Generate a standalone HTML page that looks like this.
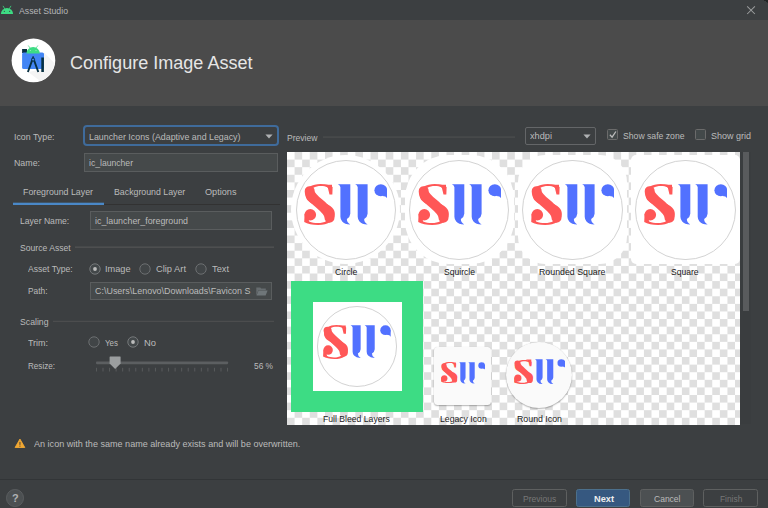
<!DOCTYPE html>
<html lang="en">
<head>
<meta charset="utf-8">
<title>Asset Studio</title>
<style>
html,body{margin:0;padding:0;background:#3c3f41;}
body{width:768px;height:508px;overflow:hidden;font-family:"Liberation Sans",sans-serif;}
#win{position:relative;width:768px;height:508px;background:#3c3f41;overflow:hidden;}
#win div,#win svg,#win span{position:absolute;box-sizing:border-box;}
.t{white-space:pre;transform-origin:0 50%;}
#hdr{left:0;top:20px;width:768px;height:86px;background:#4b4b4b;}
.inp{background:#45494a;border:1px solid #5a5d5e;}
.line{height:2px;background:linear-gradient(#46494a 50%,#4e4f50 50%);}
.chk{width:11px;height:11px;border:1px solid #6b6b6b;background:#43494a;border-radius:1.5px;}
.btn{top:489px;width:54.6px;height:17.8px;border-radius:2.5px;border:1px solid #5e6060;}
#panel{left:287px;top:151.8px;width:453px;height:272.9px;overflow:hidden;
 background-color:#fff;background-image:conic-gradient(#dfdfdf 25%,#fff 0 50%,#dfdfdf 0 75%,#fff 0);background-size:15.2px 15.2px;}
.safe{border:1px solid #d3d3d3;border-radius:50%;}
.white{background:#fff;}

</style>
</head>
<body>
<div id="win">
<!-- title bar -->
<svg style="left:0;top:5px" width="14" height="10" viewBox="0 0 14 10">
  <path d="M0.9 9 A6.1 6.1 0 0 1 13.1 9 Z" fill="#3ddc84"/>
  <path d="M3.2 1.2 L4.6 3.6 M10.8 1.2 L9.4 3.6" stroke="#3ddc84" stroke-width="0.8" stroke-linecap="round"/>
  <circle cx="4.3" cy="6.4" r="0.55" fill="#3c3f41"/><circle cx="9.7" cy="6.4" r="0.55" fill="#3c3f41"/>
</svg>
<svg style="left:746px;top:5px" width="10" height="10" viewBox="0 0 10 10">
  <path d="M1.2 1.4 L8.9 9 M8.9 1.4 L1.2 9" stroke="#9b9d9e" stroke-width="1.05"/>
</svg>
<div style="left:764px;top:0;width:4px;height:1px;background:#232526"></div>
<div style="left:766px;top:1px;width:2px;height:1px;background:#232526"></div>
<div style="left:767px;top:2px;width:1px;height:1px;background:#2a2c2e"></div>
<!-- header -->
<div id="hdr"></div>
<svg style="left:11px;top:38px" width="45" height="45" viewBox="0 0 45 45">
  <circle cx="22.45" cy="22.45" r="21.85" fill="#fff"/>
  <path d="M33 14.6 L43.6 25.2 A21.85 21.85 0 0 1 29.5 43.2 L17 34 L33 31 Z" fill="#f4f4f4"/>
  <path d="M16 11 H11.1 V15 H16 Z" fill="#073042"/>
  <rect x="11.1" y="14.4" width="21.9" height="16.6" rx="1.6" fill="#4285f4"/>
  <path d="M15.4 15.5 A6.75 6.4 0 0 1 28.9 15.5 Z" fill="#3ddc84"/>
  <path d="M17.5 7.8 L19 10 M26.7 7.8 L25.2 10" stroke="#3ddc84" stroke-width="0.7" stroke-linecap="round"/>
  <circle cx="19.3" cy="12.6" r="0.5" fill="#b8f0d0"/><circle cx="25" cy="12.6" r="0.5" fill="#b8f0d0"/>
  <rect x="30.3" y="19.5" width="2.6" height="14.5" fill="#073042"/>
  <path d="M22.1 19.6 L16.9 34 M22.1 19.6 L27.3 34" stroke="#073042" stroke-width="1.9" fill="none"/>
  <circle cx="22.1" cy="21.6" r="1.5" fill="#4285f4" stroke="#073042" stroke-width="0.9"/>
  <path d="M22.1 18 V20" stroke="#073042" stroke-width="1"/>
</svg>

<!-- Icon type combo -->
<div style="left:83px;top:125.2px;width:196px;height:21.1px;border-radius:4px;background:#3c3f41;border:2.3px solid #3f6b9b"></div>
<svg style="left:265px;top:134px" width="8" height="5" viewBox="0 0 8 5"><path d="M0.4 0.5 H7.6 L4 4.6 Z" fill="#afb1b3"/></svg>
<!-- Name -->
<div class="inp" style="left:84px;top:153px;width:194px;height:19px"></div>
<!-- Tabs -->
<div style="left:13px;top:204px;width:267px;height:1px;background:#323232"></div>
<div style="left:13px;top:202px;width:90.8px;height:1px;background:rgba(74,136,199,.3)"></div>
<div style="left:13px;top:203px;width:90.8px;height:2px;background:#4a88c7"></div>
<!-- Layer name -->
<div class="inp" style="left:90px;top:211px;width:182px;height:18.6px"></div>
<!-- Source Asset -->
<div class="line" style="left:75px;top:246px;width:199px"></div>
<svg style="left:87.90px;top:261.60px" width="14" height="14" viewBox="0 0 14 14"><circle cx="7" cy="7" r="5.2" fill="#43484a" stroke="#75787a" stroke-width="1"/><circle cx="7" cy="7" r="1.9" fill="#bdbdbd"/></svg>
<svg style="left:138.40px;top:261.60px" width="14" height="14" viewBox="0 0 14 14"><circle cx="7" cy="7" r="5.2" fill="#414547" stroke="#6c6f71" stroke-width="1"/></svg>
<svg style="left:193.60px;top:261.60px" width="14" height="14" viewBox="0 0 14 14"><circle cx="7" cy="7" r="5.2" fill="#414547" stroke="#6c6f71" stroke-width="1"/></svg>
<div class="inp" style="left:90px;top:281.5px;width:181.5px;height:18.2px"></div>
<svg style="left:255.5px;top:286.6px" width="12" height="9" viewBox="0 0 12 9">
  <path d="M0.3 8.6 V0.4 H4.3 L5.2 1.5 H9.8 V3.2 H2.4 L0.3 8.6 Z" fill="#666c6f"/>
  <path d="M2.6 3.5 H11.6 L9.6 8.6 H0.5 Z" fill="#6f7679"/>
</svg>
<!-- Scaling -->
<div class="line" style="left:53px;top:320px;width:221px;background:linear-gradient(#3f4244 50%,#4c4d4e 50%)"></div>
<svg style="left:87.40px;top:335.40px" width="14" height="14" viewBox="0 0 14 14"><circle cx="7" cy="7" r="5.2" fill="#414547" stroke="#6c6f71" stroke-width="1"/></svg>
<svg style="left:126.40px;top:335.40px" width="14" height="14" viewBox="0 0 14 14"><circle cx="7" cy="7" r="5.2" fill="#43484a" stroke="#75787a" stroke-width="1"/><circle cx="7" cy="7" r="1.9" fill="#bdbdbd"/></svg>
<!-- slider -->
<svg style="left:96px;top:360px" width="134" height="12" viewBox="0 0 134 12">
  <rect x="0" y="1.55" width="132.1" height="2.6" rx="0.8" fill="#5c5f61"/>
  <path d="M0.45 7.8V11.5M7.00 7.8V11.5M13.56 7.8V11.5M20.11 7.8V11.5M26.67 7.8V11.5M33.23 7.8V11.5M39.78 7.8V11.5M46.34 7.8V11.5M52.89 7.8V11.5M59.45 7.8V11.5M66.00 7.8V11.5M72.55 7.8V11.5M79.11 7.8V11.5M85.67 7.8V11.5M92.22 7.8V11.5M98.77 7.8V11.5M105.33 7.8V11.5M111.89 7.8V11.5M118.44 7.8V11.5M124.99 7.8V11.5M131.55 7.8V11.5" stroke="#5b5e60" stroke-width="0.9"/>
</svg>
<svg style="left:108.5px;top:355.7px" width="13" height="15" viewBox="0 0 13 15">
  <path d="M1.1 0.5 H11.1 Q11.6 0.5 11.6 1 V7.4 L6.1 13.1 L0.6 7.4 V1 Q0.6 0.5 1.1 0.5 Z" fill="#9b9e9f"/>
</svg>
<!-- warning -->
<svg style="left:13.5px;top:438px" width="12" height="11" viewBox="0 0 12 11">
  <path d="M5.95 1.1 L10.8 9.5 H1.1 Z" fill="#f0a732" stroke="#f0a732" stroke-width="0.9" stroke-linejoin="round"/>
  <path d="M5.95 3.9 V6.9" stroke="#4a4336" stroke-width="1"/>
  <rect x="5.45" y="7.6" width="1" height="1.1" fill="#4a4336"/>
</svg>

<!-- preview header -->
<div class="line" style="left:322.5px;top:136px;width:192.5px;background:linear-gradient(#444748 50%,#47494a 50%)"></div>
<div style="left:525px;top:127px;width:70.5px;height:17.6px;border:1px solid #646668;border-radius:2px"></div>
<svg style="left:583px;top:133.6px" width="8" height="5" viewBox="0 0 8 5"><path d="M0.4 0.5 H7.6 L4 4.6 Z" fill="#afb1b3"/></svg>
<div class="chk" style="left:607px;top:129px"></div>
<svg style="left:607px;top:129px" width="11" height="11" viewBox="0 0 11 11"><path d="M2.9 5.7 L5.1 8.1 L8.9 2.5" stroke="#bdbdbd" stroke-width="1.3" fill="none"/></svg>
<div class="chk" style="left:695px;top:129px"></div>

<!-- preview panel -->
<div id="panel">
  <!-- top row shapes (coords relative to panel: page - (287,151.8)) -->
  <div class="white" style="left:4.25px;top:3.7px;width:109px;height:109px;border-radius:50%"></div>
  <div class="white" style="left:117.5px;top:3.7px;width:109px;height:109px;border-radius:40%"></div>
  <div class="white" style="left:230.75px;top:3.7px;width:109px;height:109px;border-radius:27px"></div>
  <div class="white" style="left:343.5px;top:3.7px;width:109.5px;height:109px;border-radius:5px"></div>
  <div class="safe" style="left:8.5px;top:8px;width:100.5px;height:100.5px"></div>
  <div class="safe" style="left:121.75px;top:8px;width:100.5px;height:100.5px"></div>
  <div class="safe" style="left:235px;top:8px;width:100.5px;height:100.5px"></div>
  <div class="safe" style="left:348px;top:8px;width:100.5px;height:100.5px"></div>
  <svg style="left:17.25px;top:32.221000000000004px" width="83.00" height="41.35" viewBox="0 0 83 41.05"><text transform="translate(-3.37 39.95) scale(1.231 1)" style="font-family:'Noto Serif CJK SC','Liberation Serif',serif;font-weight:400;font-size:53.5px" fill="#ff5757">S</text><path d="M5.7 7C5.7 16 25.5 23 25.5 33.5" stroke="#ff5757" stroke-width="10" fill="none" stroke-linecap="round"/><circle cx="6.3" cy="30.6" r="5.8" fill="#ff5757"/><path d="M19.5 0.5H28V9.5Q25.5 3.5 19.5 0.5Z" fill="#ff5757"/><path d="M33.9 0.1H46.3V29.5Q46.2 32.5 42.9 34.9Q42.6 38 46.3 40.3Q40.8 40.4 38.2 37.3Q36.4 35.2 36.4 32.6V3Q36.2 1 33.9 0.1Z M51.2 0.1H63.6V29.5Q63.5 32.5 60.2 34.9Q59.9 38 63.6 40.3Q58.1 40.4 55.5 37.3Q53.7 35.2 53.7 32.6V3Q53.5 1 51.2 0.1Z" fill="#5271ff"/><ellipse cx="76.8" cy="6.15" rx="6.4" ry="6.05" fill="#5271ff"/><path d="M83.2 6V14.3Q82.4 12 78.5 11.9Z" fill="#5271ff"/></svg>
  <svg style="left:130.50px;top:32.221000000000004px" width="83.00" height="41.35" viewBox="0 0 83 41.05"><text transform="translate(-3.37 39.95) scale(1.231 1)" style="font-family:'Noto Serif CJK SC','Liberation Serif',serif;font-weight:400;font-size:53.5px" fill="#ff5757">S</text><path d="M5.7 7C5.7 16 25.5 23 25.5 33.5" stroke="#ff5757" stroke-width="10" fill="none" stroke-linecap="round"/><circle cx="6.3" cy="30.6" r="5.8" fill="#ff5757"/><path d="M19.5 0.5H28V9.5Q25.5 3.5 19.5 0.5Z" fill="#ff5757"/><path d="M33.9 0.1H46.3V29.5Q46.2 32.5 42.9 34.9Q42.6 38 46.3 40.3Q40.8 40.4 38.2 37.3Q36.4 35.2 36.4 32.6V3Q36.2 1 33.9 0.1Z M51.2 0.1H63.6V29.5Q63.5 32.5 60.2 34.9Q59.9 38 63.6 40.3Q58.1 40.4 55.5 37.3Q53.7 35.2 53.7 32.6V3Q53.5 1 51.2 0.1Z" fill="#5271ff"/><ellipse cx="76.8" cy="6.15" rx="6.4" ry="6.05" fill="#5271ff"/><path d="M83.2 6V14.3Q82.4 12 78.5 11.9Z" fill="#5271ff"/></svg>
  <svg style="left:243.75px;top:32.221000000000004px" width="83.00" height="41.35" viewBox="0 0 83 41.05"><text transform="translate(-3.37 39.95) scale(1.231 1)" style="font-family:'Noto Serif CJK SC','Liberation Serif',serif;font-weight:400;font-size:53.5px" fill="#ff5757">S</text><path d="M5.7 7C5.7 16 25.5 23 25.5 33.5" stroke="#ff5757" stroke-width="10" fill="none" stroke-linecap="round"/><circle cx="6.3" cy="30.6" r="5.8" fill="#ff5757"/><path d="M19.5 0.5H28V9.5Q25.5 3.5 19.5 0.5Z" fill="#ff5757"/><path d="M33.9 0.1H46.3V29.5Q46.2 32.5 42.9 34.9Q42.6 38 46.3 40.3Q40.8 40.4 38.2 37.3Q36.4 35.2 36.4 32.6V3Q36.2 1 33.9 0.1Z M51.2 0.1H63.6V29.5Q63.5 32.5 60.2 34.9Q59.9 38 63.6 40.3Q58.1 40.4 55.5 37.3Q53.7 35.2 53.7 32.6V3Q53.5 1 51.2 0.1Z" fill="#5271ff"/><ellipse cx="76.8" cy="6.15" rx="6.4" ry="6.05" fill="#5271ff"/><path d="M83.2 6V14.3Q82.4 12 78.5 11.9Z" fill="#5271ff"/></svg>
  <svg style="left:356.80px;top:32.221000000000004px" width="83.00" height="41.35" viewBox="0 0 83 41.05"><text transform="translate(-3.37 39.95) scale(1.231 1)" style="font-family:'Noto Serif CJK SC','Liberation Serif',serif;font-weight:400;font-size:53.5px" fill="#ff5757">S</text><path d="M5.7 7C5.7 16 25.5 23 25.5 33.5" stroke="#ff5757" stroke-width="10" fill="none" stroke-linecap="round"/><circle cx="6.3" cy="30.6" r="5.8" fill="#ff5757"/><path d="M19.5 0.5H28V9.5Q25.5 3.5 19.5 0.5Z" fill="#ff5757"/><path d="M33.9 0.1H46.3V29.5Q46.2 32.5 42.9 34.9Q42.6 38 46.3 40.3Q40.8 40.4 38.2 37.3Q36.4 35.2 36.4 32.6V3Q36.2 1 33.9 0.1Z M51.2 0.1H63.6V29.5Q63.5 32.5 60.2 34.9Q59.9 38 63.6 40.3Q58.1 40.4 55.5 37.3Q53.7 35.2 53.7 32.6V3Q53.5 1 51.2 0.1Z" fill="#5271ff"/><ellipse cx="76.8" cy="6.15" rx="6.4" ry="6.05" fill="#5271ff"/><path d="M83.2 6V14.3Q82.4 12 78.5 11.9Z" fill="#5271ff"/></svg>
  <!-- full bleed -->
  <div style="left:3.6px;top:129.3px;width:132.5px;height:131.1px;background:#3ddc84"></div>
  <div class="white" style="left:26px;top:150.2px;width:88.6px;height:89px"></div>
  <div class="safe" style="left:29.8px;top:154.2px;width:80.7px;height:80.7px"></div>
  <svg style="left:36.25px;top:173.4725px" width="67.50" height="33.74" viewBox="0 0 83 41.05"><text transform="translate(-3.37 39.95) scale(1.231 1)" style="font-family:'Noto Serif CJK SC','Liberation Serif',serif;font-weight:400;font-size:53.5px" fill="#ff5757">S</text><path d="M5.7 7C5.7 16 25.5 23 25.5 33.5" stroke="#ff5757" stroke-width="10" fill="none" stroke-linecap="round"/><circle cx="6.3" cy="30.6" r="5.8" fill="#ff5757"/><path d="M19.5 0.5H28V9.5Q25.5 3.5 19.5 0.5Z" fill="#ff5757"/><path d="M33.9 0.1H46.3V29.5Q46.2 32.5 42.9 34.9Q42.6 38 46.3 40.3Q40.8 40.4 38.2 37.3Q36.4 35.2 36.4 32.6V3Q36.2 1 33.9 0.1Z M51.2 0.1H63.6V29.5Q63.5 32.5 60.2 34.9Q59.9 38 63.6 40.3Q58.1 40.4 55.5 37.3Q53.7 35.2 53.7 32.6V3Q53.5 1 51.2 0.1Z" fill="#5271ff"/><ellipse cx="76.8" cy="6.15" rx="6.4" ry="6.05" fill="#5271ff"/><path d="M83.2 6V14.3Q82.4 12 78.5 11.9Z" fill="#5271ff"/></svg>
  <!-- legacy -->
  <div style="left:146.75px;top:195.2px;width:57.5px;height:58px;border-radius:3.5px;background:#fafafa;box-shadow:0 1px 1.5px rgba(0,0,0,.28),0 0 1px rgba(0,0,0,.15)"></div>
  <svg style="left:153.50px;top:210.178px" width="44.00" height="22.20" viewBox="0 0 83 41.05"><text transform="translate(-3.37 39.95) scale(1.231 1)" style="font-family:'Noto Serif CJK SC','Liberation Serif',serif;font-weight:400;font-size:53.5px" fill="#ff5757">S</text><path d="M5.7 7C5.7 16 25.5 23 25.5 33.5" stroke="#ff5757" stroke-width="10" fill="none" stroke-linecap="round"/><circle cx="6.3" cy="30.6" r="5.8" fill="#ff5757"/><path d="M19.5 0.5H28V9.5Q25.5 3.5 19.5 0.5Z" fill="#ff5757"/><path d="M33.9 0.1H46.3V29.5Q46.2 32.5 42.9 34.9Q42.6 38 46.3 40.3Q40.8 40.4 38.2 37.3Q36.4 35.2 36.4 32.6V3Q36.2 1 33.9 0.1Z M51.2 0.1H63.6V29.5Q63.5 32.5 60.2 34.9Q59.9 38 63.6 40.3Q58.1 40.4 55.5 37.3Q53.7 35.2 53.7 32.6V3Q53.5 1 51.2 0.1Z" fill="#5271ff"/><ellipse cx="76.8" cy="6.15" rx="6.4" ry="6.05" fill="#5271ff"/><path d="M83.2 6V14.3Q82.4 12 78.5 11.9Z" fill="#5271ff"/></svg>
  <!-- round -->
  <div style="left:219px;top:190.2px;width:66px;height:66px;border-radius:50%;background:#fafafa;box-shadow:0 1px 1.5px rgba(0,0,0,.28),0 0 1px rgba(0,0,0,.15)"></div>
  <svg style="left:226.57px;top:207.15875px" width="51.25" height="25.76" viewBox="0 0 83 41.05"><text transform="translate(-3.37 39.95) scale(1.231 1)" style="font-family:'Noto Serif CJK SC','Liberation Serif',serif;font-weight:400;font-size:53.5px" fill="#ff5757">S</text><path d="M5.7 7C5.7 16 25.5 23 25.5 33.5" stroke="#ff5757" stroke-width="10" fill="none" stroke-linecap="round"/><circle cx="6.3" cy="30.6" r="5.8" fill="#ff5757"/><path d="M19.5 0.5H28V9.5Q25.5 3.5 19.5 0.5Z" fill="#ff5757"/><path d="M33.9 0.1H46.3V29.5Q46.2 32.5 42.9 34.9Q42.6 38 46.3 40.3Q40.8 40.4 38.2 37.3Q36.4 35.2 36.4 32.6V3Q36.2 1 33.9 0.1Z M51.2 0.1H63.6V29.5Q63.5 32.5 60.2 34.9Q59.9 38 63.6 40.3Q58.1 40.4 55.5 37.3Q53.7 35.2 53.7 32.6V3Q53.5 1 51.2 0.1Z" fill="#5271ff"/><ellipse cx="76.8" cy="6.15" rx="6.4" ry="6.05" fill="#5271ff"/><path d="M83.2 6V14.3Q82.4 12 78.5 11.9Z" fill="#5271ff"/></svg>
</div>
<!-- scrollbar -->
<div style="left:740px;top:151.8px;width:11px;height:272.7px;background:#3a3d3f"></div>
<div style="left:742.8px;top:151.8px;width:6.2px;height:159px;background:#595b5d"></div>

<!-- footer -->
<div style="left:0;top:478.7px;width:768px;height:1px;background:#323537"></div>
<div style="left:6.1px;top:489.1px;width:17.7px;height:17.7px;border-radius:50%;background:#4c5052;border:1px solid #5a5d5f"></div>
<span class="t" style="left:11.6px;top:490.5px;font-size:11.5px;line-height:15px;color:#b0b2b4;font-weight:700;transform:scaleX(.95)">?</span>
<div class="btn" style="left:512px"></div>
<div class="btn" style="left:575.7px;background:#365880;border-color:#4c708c"></div>
<div class="btn" style="left:639.5px;background:#4c5052"></div>
<div class="btn" style="left:703.3px"></div>

<div id="texts">
<span class="t" style="left:18.75px;top:6px;font-size:9px;line-height:10px;color:#b4b6b8;transform:scaleX(0.9697)">Asset Studio</span>
<span class="t" style="left:70.00px;top:52px;font-size:18.7px;line-height:21px;color:#e6e6e6;transform:scaleX(0.9653)">Configure Image Asset</span>
<span class="t" style="left:13.50px;top:131px;font-size:9.8px;line-height:11px;color:#bbbbbb;transform:scaleX(0.8994)">Icon Type:</span>
<span class="t" style="left:89.00px;top:131px;font-size:9.8px;line-height:11px;color:#bbbbbb;transform:scaleX(0.9031)">Launcher Icons (Adaptive and Legacy)</span>
<span class="t" style="left:13.50px;top:157px;font-size:9.8px;line-height:11px;color:#bbbbbb;transform:scaleX(0.9009)">Name:</span>
<span class="t" style="left:89.00px;top:157px;font-size:9.8px;line-height:11px;color:#bbbbbb;transform:scaleX(0.8781)">ic_launcher</span>
<span class="t" style="left:23.25px;top:186px;font-size:9.8px;line-height:11px;color:#bbbbbb;transform:scaleX(0.8987)">Foreground Layer</span>
<span class="t" style="left:113.75px;top:186px;font-size:9.8px;line-height:11px;color:#bbbbbb;transform:scaleX(0.8961)">Background Layer</span>
<span class="t" style="left:204.50px;top:186px;font-size:9.8px;line-height:11px;color:#bbbbbb;transform:scaleX(0.9329)">Options</span>
<span class="t" style="left:19.75px;top:215px;font-size:9.8px;line-height:11px;color:#bbbbbb;transform:scaleX(0.8780)">Layer Name:</span>
<span class="t" style="left:95.00px;top:215px;font-size:9.8px;line-height:11px;color:#bbbbbb;transform:scaleX(0.9033)">ic_launcher_foreground</span>
<span class="t" style="left:19.75px;top:242px;font-size:9.8px;line-height:11px;color:#bbbbbb;transform:scaleX(0.8790)">Source Asset</span>
<span class="t" style="left:27.50px;top:263px;font-size:9.8px;line-height:11px;color:#bbbbbb;transform:scaleX(0.8772)">Asset Type:</span>
<span class="t" style="left:105.00px;top:263px;font-size:9.8px;line-height:11px;color:#bbbbbb;transform:scaleX(0.9363)">Image</span>
<span class="t" style="left:156.00px;top:263px;font-size:9.8px;line-height:11px;color:#bbbbbb;transform:scaleX(0.9500)">Clip Art</span>
<span class="t" style="left:211.50px;top:263px;font-size:9.8px;line-height:11px;color:#bbbbbb;transform:scaleX(0.9461)">Text</span>
<span class="t" style="left:27.50px;top:285px;font-size:9.8px;line-height:11px;color:#bbbbbb;transform:scaleX(0.8519)">Path:</span>
<span class="t" style="left:95.00px;top:285px;font-size:9.8px;line-height:11px;color:#bbbbbb;transform:scaleX(0.9124)">C:\Users\Lenovo\Downloads\Favicon S</span>
<span class="t" style="left:19.75px;top:316px;font-size:9.8px;line-height:11px;color:#bbbbbb;transform:scaleX(0.8867)">Scaling</span>
<span class="t" style="left:27.50px;top:337px;font-size:9.8px;line-height:11px;color:#bbbbbb;transform:scaleX(0.9110)">Trim:</span>
<span class="t" style="left:105.00px;top:337px;font-size:9.8px;line-height:11px;color:#bbbbbb;transform:scaleX(0.8133)">Yes</span>
<span class="t" style="left:144.00px;top:337px;font-size:9.8px;line-height:11px;color:#bbbbbb;transform:scaleX(0.9576)">No</span>
<span class="t" style="left:27.50px;top:360px;font-size:9.8px;line-height:11px;color:#bbbbbb;transform:scaleX(0.8264)">Resize:</span>
<span class="t" style="left:254.00px;top:360px;font-size:9.8px;line-height:11px;color:#bbbbbb;transform:scaleX(0.8503)">56 %</span>
<span class="t" style="left:33.75px;top:438px;font-size:9.8px;line-height:11px;color:#bbbbbb;transform:scaleX(0.9243)">An icon with the same name already exists and will be overwritten.</span>
<span class="t" style="left:286.50px;top:132px;font-size:9.8px;line-height:11px;color:#bbbbbb;transform:scaleX(0.8749)">Preview</span>
<span class="t" style="left:529.50px;top:130px;font-size:9.8px;line-height:11px;color:#bbbbbb;transform:scaleX(0.9393)">xhdpi</span>
<span class="t" style="left:623.00px;top:130px;font-size:9.8px;line-height:11px;color:#bbbbbb;transform:scaleX(0.8821)">Show safe zone</span>
<span class="t" style="left:710.50px;top:130px;font-size:9.8px;line-height:11px;color:#bbbbbb;transform:scaleX(0.9179)">Show grid</span>
<span class="t" style="left:334.60px;top:266px;font-size:9.8px;line-height:11px;color:#1a1a1a;transform:scaleX(0.8903)">Circle</span>
<span class="t" style="left:443.70px;top:266px;font-size:9.8px;line-height:11px;color:#1a1a1a;transform:scaleX(0.8756)">Squircle</span>
<span class="t" style="left:538.55px;top:266px;font-size:9.8px;line-height:11px;color:#1a1a1a;transform:scaleX(0.8975)">Rounded Square</span>
<span class="t" style="left:670.65px;top:266px;font-size:9.8px;line-height:11px;color:#1a1a1a;transform:scaleX(0.8704)">Square</span>
<span class="t" style="left:322.90px;top:413px;font-size:9.8px;line-height:11px;color:#1a1a1a;transform:scaleX(0.8811)">Full Bleed Layers</span>
<span class="t" style="left:439.52px;top:413px;font-size:9.8px;line-height:11px;color:#1a1a1a;transform:scaleX(0.8847)">Legacy Icon</span>
<span class="t" style="left:517.00px;top:413px;font-size:9.8px;line-height:11px;color:#1a1a1a;transform:scaleX(0.8980)">Round Icon</span>
<span class="t" style="left:522.80px;top:493px;font-size:9.8px;line-height:11px;color:#777777;transform:scaleX(0.8734)">Previous</span>
<span class="t" style="left:593.90px;top:493px;font-size:9.8px;line-height:11px;color:#eeeeee;transform:scaleX(0.9412);font-weight:700">Next</span>
<span class="t" style="left:653.90px;top:493px;font-size:9.8px;line-height:11px;color:#bbbbbb;transform:scaleX(0.8689)">Cancel</span>
<span class="t" style="left:719.50px;top:493px;font-size:9.8px;line-height:11px;color:#777777;transform:scaleX(0.8531)">Finish</span>
</div>
</div>
</body>
</html>
